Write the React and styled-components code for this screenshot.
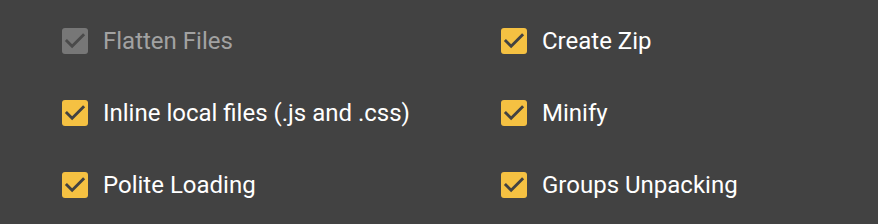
import React from "react";
import styled, { createGlobalStyle } from "styled-components";

const GlobalStyle = createGlobalStyle`
  html, body {
    margin: 0;
    padding: 0;
    background-color: #424242;
  }
`;

const Panel = styled.div`
  display: grid;
  grid-template-columns: 439px 439px;
  grid-auto-rows: 72px;
  padding: 5px 0 0 0;
  width: 878px;
  height: 224px;
  box-sizing: border-box;
  background-color: #424242;
  font-family: Roboto, "Liberation Sans", sans-serif;
`;

const Option = styled.label`
  display: flex;
  align-items: center;
  gap: 15px;
  padding-left: 62px;
  font-size: 24px;
  color: ${(p) => (p.disabled ? "#a2a2a2" : "#ffffff")};
  cursor: ${(p) => (p.disabled ? "default" : "pointer")};
`;

const Box = styled.span`
  display: flex;
  align-items: center;
  justify-content: center;
  width: 26px;
  height: 26px;
  border-radius: 3px;
  flex-shrink: 0;
  background-color: ${(p) => (p.disabled ? "#777777" : "#f5c142")};

  svg {
    width: 26px;
    height: 26px;
  }
`;

const Check = ({ disabled }) => (
  <Box disabled={disabled}>
    <svg viewBox="3 3 18 18">
      <path
        d="M10 17l-5-5 1.41-1.41L10 14.17l7.59-7.59L19 8l-9 9z"
        fill={disabled ? "#4a4a4a" : "#424242"}
      />
    </svg>
  </Box>
);

const options = [
  { label: "Flatten Files", disabled: true },
  { label: "Create Zip" },
  { label: "Inline local files (.js and .css)" },
  { label: "Minify" },
  { label: "Polite Loading" },
  { label: "Groups Unpacking" },
];

export default function App() {
  return (
    <>
      <GlobalStyle />
      <Panel>
        {options.map((o) => (
          <Option key={o.label} disabled={o.disabled}>
            <Check disabled={o.disabled} />
            {o.label}
          </Option>
        ))}
      </Panel>
    </>
  );
}
